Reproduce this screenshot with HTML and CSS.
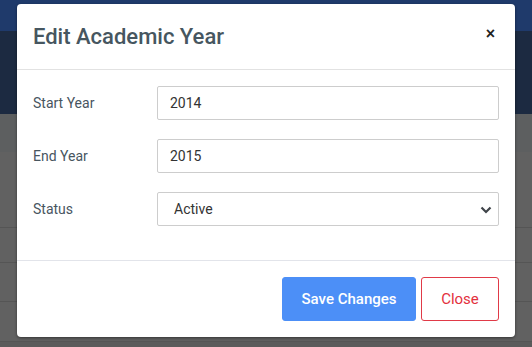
FILE: index.html
```html
<!DOCTYPE html>
<html lang="en">
<head>
    <meta charset="UTF-8">
    <meta name="viewport" content="width=device-width, initial-scale=1.0">
    <title>Edit Academic Year</title>
    <link rel="stylesheet" href="styles.css">
</head>
<body>
    <!-- page behind the modal -->
    <div class="page">
        <div class="navbar"></div>
        <div class="subbar"></div>
        <div class="table">
            <div class="row row-head"></div>
            <div class="row row-a"></div>
            <div class="row row-b"></div>
            <div class="row row-c"></div>
            <div class="row row-d"></div>
        </div>
    </div>

    <!-- modal -->
    <div class="modal">
        <div class="modal-header">
            <h4 class="modal-title">Edit Academic Year</h4>
            <button class="close-x" type="button">&times;</button>
        </div>
        <form class="modal-body">
            <div class="form-row">
                <label for="start-year">Start Year</label>
                <input type="text" id="start-year" class="form-control" value="2014">
            </div>
            <div class="form-row">
                <label for="end-year">End Year</label>
                <input type="text" id="end-year" class="form-control" value="2015">
            </div>
            <div class="form-row">
                <label for="status">Status</label>
                <div class="select-wrap">
                    <select id="status" class="form-control">
                        <option>Active</option>
                        <option>Inactive</option>
                    </select>
                    <svg class="chevron" width="12" height="8" viewBox="0 0 12 8"><path d="M1.5 1.5 L6 6 L10.5 1.5" fill="none" stroke="#3f4449" stroke-width="2.2"/></svg>
                </div>
            </div>
        </form>
        <div class="modal-footer">
            <button class="btn btn-primary" type="button">Save Changes</button>
            <button class="btn btn-outline-danger" type="button">Close</button>
        </div>
    </div>
</body>
</html>
```

FILE: styles.css
```css
* {
    box-sizing: border-box;
}

body {
    margin: 0;
    font-family: Roboto, "Liberation Sans", sans-serif;
    background-color: #5b5b5b;
    overflow: hidden;
    height: 347px;
}

/* fond de page assombri */
.navbar {
    height: 31px;
    background-color: #1f3a6b;
}

.subbar {
    height: 83px;
    background-color: #1c2a41;
}

.row {
    background-color: #616161;
    border-bottom: 1px solid #555;
}

.row-head {
    height: 38px;
    background-color: #5d5f60;
    border-bottom: none;
}

.row-a { height: 76px; }
.row-b { height: 35px; }
.row-c { height: 39px; }
.row-d { height: 40px; }

/* modal */
.modal {
    position: absolute;
    top: 4px;
    left: 17px;
    width: 498px;
    height: 333px;
    background-color: #fff;
    border-radius: 4px;
    box-shadow: 0 1px 3px rgba(0, 0, 0, 0.45);
    display: flex;
    flex-direction: column;
}

.modal-header {
    height: 66px;
    display: flex;
    align-items: center;
    justify-content: space-between;
    padding: 0 16px;
    border-bottom: 1px solid #e2e2e2;
}

.modal-title {
    margin: 0;
    font-size: 22px;
    font-weight: 500;
    color: #465660;
}

.close-x {
    border: none;
    background: none;
    padding: 0;
    font-family: "Liberation Sans", sans-serif;
    font-size: 16px;
    font-weight: 700;
    line-height: 1;
    color: #222;
    margin-right: 4px;
    margin-top: -6px;
}

.modal-body {
    padding: 16px 16px 34px 16px;
    margin: 0;
    border-bottom: 1px solid #e2e4ea;
    display: flex;
    flex-direction: column;
    gap: 19px;
}

.form-row {
    display: flex;
    align-items: center;
}

.form-row label {
    width: 124px;
    font-size: 14px;
    color: #48555f;
}

.form-control {
    flex: 1;
    height: 34px;
    padding: 0 12px;
    border: 1px solid #cdcdcd;
    border-radius: 2px;
    font-family: Roboto, "Liberation Sans", sans-serif;
    font-size: 14px;
    color: #333;
    background-color: #fff;
}

.select-wrap {
    flex: 1;
    display: flex;
    position: relative;
}

select.form-control {
    appearance: none;
    -webkit-appearance: none;
    padding-left: 16px;
}

.chevron {
    position: absolute;
    right: 7px;
    top: 14px;
}

.modal-footer {
    flex: 1;
    display: flex;
    justify-content: flex-end;
    align-items: center;
    gap: 5px;
    padding: 0 16px;
}

.btn {
    height: 44px;
    border-radius: 3px;
    font-family: Roboto, "Liberation Sans", sans-serif;
    font-size: 15px;
    font-weight: 500;
    padding: 0;
    white-space: nowrap;
}

.btn-primary {
    width: 134px;
    background-color: #4c8ff7;
    border: 1px solid #4c8ff7;
    color: #fff;
}

.btn-outline-danger {
    width: 78px;
    background-color: #fff;
    border: 1px solid #e03a47;
    color: #e3303d;
    font-weight: 400;
}
```
